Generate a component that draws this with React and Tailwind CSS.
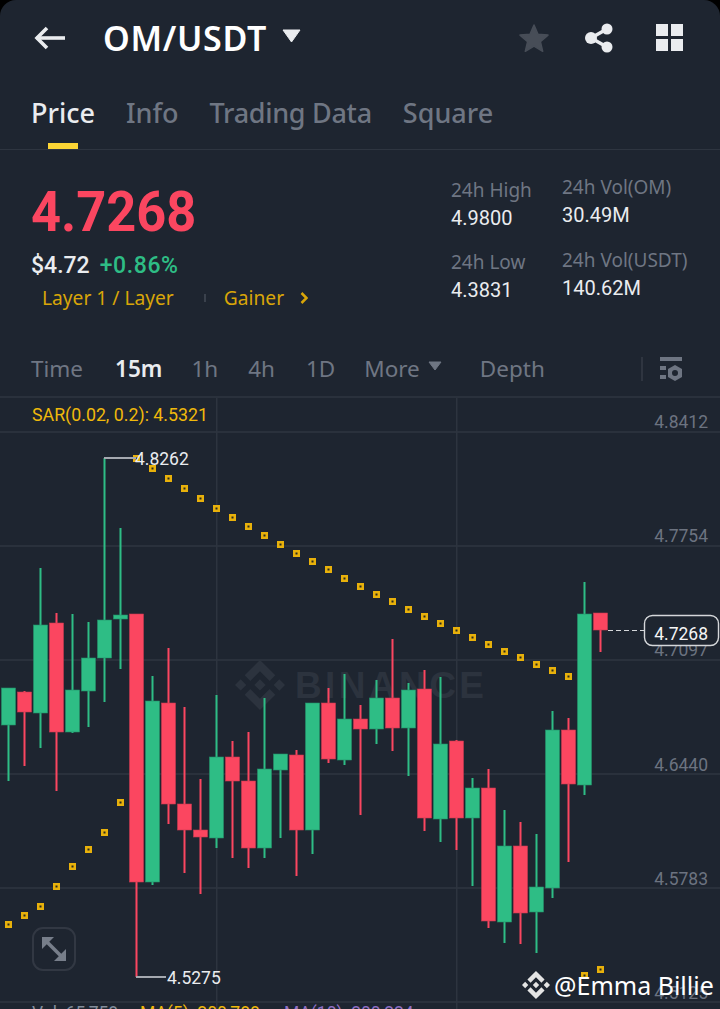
import React from "react";
import { SiBinance } from "react-icons/si";

// x, open-close box (top/bottom), wick (hi/lo), g = green
const candles = [
  [8, 688, 725, 688, 781, 1], [24, 692, 712, 691, 766, 0], [40, 625, 713, 568, 748, 1], [56, 623, 732, 613, 791, 0],
  [72, 690, 732, 614, 733, 1], [88, 658, 691, 622, 727, 1], [104, 620, 658, 458, 702, 1], [120, 615, 619, 528, 669, 1],
  [136, 614, 882, 614, 977, 0], [152, 701, 882, 676, 885, 1], [168, 703, 804, 648, 824, 0], [184, 804, 830, 707, 873, 0],
  [200, 830, 837, 779, 894, 0], [216, 757, 838, 695, 848, 1], [232, 757, 781, 741, 858, 0], [248, 781, 848, 732, 868, 0],
  [264, 769, 848, 698, 858, 1], [280, 754, 770, 754, 838, 1], [296, 755, 830, 750, 876, 0], [312, 703, 830, 703, 854, 1],
  [328, 703, 759, 688, 763, 0], [344, 719, 760, 674, 765, 1], [360, 719, 729, 705, 815, 0], [376, 698, 729, 680, 744, 1],
  [392, 698, 728, 639, 751, 0], [408, 690, 728, 683, 776, 1], [424, 689, 818, 670, 831, 0], [440, 744, 819, 677, 842, 1],
  [456, 741, 818, 740, 850, 0], [472, 788, 818, 778, 886, 1], [488, 788, 921, 769, 928, 0], [504, 846, 922, 810, 943, 1],
  [520, 846, 913, 822, 944, 0], [536, 887, 912, 834, 953, 1], [552, 730, 888, 711, 898, 1], [568, 730, 784, 718, 862, 0],
  [584, 614, 785, 582, 795, 1], [600, 613, 630, 613, 652, 0],
];

const sar = [
  [8, 924], [24, 915], [40, 906], [56, 886], [72, 866], [88, 849], [104, 832], [120, 802],
  [136, 458], [152, 468], [168, 478], [184, 488], [200, 498], [216, 508], [232, 517], [248, 526], [264, 535],
  [280, 544], [296, 553], [312, 561], [328, 569], [344, 578], [360, 586], [376, 594], [392, 601], [408, 609],
  [424, 616], [440, 623], [456, 630], [472, 637], [488, 644], [504, 651], [520, 657], [536, 664], [552, 670], [568, 676],
  [584, 975], [600, 969],
];

const gridY = [432, 546, 660, 774, 888, 1002];
const axis = [["4.8412", 428], ["4.7754", 542], ["4.7097", 656], ["4.6440", 771], ["4.5783", 885], ["4.5125", 999]];

function Chart() {
  return (
    <svg viewBox="0 398 720 611" className="block w-[720px] h-[611px] font-['Roboto']">
      {gridY.map((y) => (
        <rect key={y} x="0" y={y - 1} width="720" height="2" fill="#2a313c" />
      ))}
      <rect x="216" y="398" width="1.5" height="611" fill="#2d343f" />
      <rect x="456" y="398" width="1.5" height="611" fill="#2d343f" />

      {/* watermark */}
      <SiBinance x="235" y="660" size={50} fill="#2c333e" />
      <text x="295" y="698" fontSize="37" fontWeight="700" letterSpacing="3.4" fill="#2c333e" className="font-['Liberation_Sans']">
        BINANCE
      </text>

      {axis.map(([t, y]) => (
        <text key={t} x="708" y={y} textAnchor="end" fontSize="17.5" fill="#6c7380">{t}</text>
      ))}

      {candles.map(([x, top, bot, hi, lo, g]) => {
        const c = g ? "#2ebd85" : "#fb4660";
        const edge = g ? "#23916a" : "#c93a50";
        return (
          <g key={x}>
            <rect x={x - 0.5} y={hi} width="2" height={lo - hi} fill={c} />
            <rect x={x - 6.5} y={top} width="14" height={bot - top} fill={c} stroke={edge} strokeWidth="0.6" />
          </g>
        );
      })}

      {sar.map(([x, y]) => (
        <g key={x}>
          <rect x={x - 3} y={y - 3} width="7" height="7" fill="#e8b10b" />
          <rect x={x - 0.5} y={y - 0.5} width="2" height="2" fill="#2a2a1e" />
        </g>
      ))}

      <text x="32" y="421" fontSize="17.8" fill="#f0b90b">SAR(0.02, 0.2): 4.5321</text>

      {/* high / low marks */}
      <rect x="104" y="457" width="32" height="2" fill="#a5a9b0" />
      <text x="135" y="465" fontSize="17.5" fill="#eaecef">4.8262</text>
      <rect x="136" y="976" width="30" height="2" fill="#a5a9b0" />
      <text x="167" y="984" fontSize="17.5" fill="#eaecef">4.5275</text>

      {/* last price */}
      <line x1="608" y1="630.5" x2="644" y2="630.5" stroke="#d5d7da" strokeWidth="1.2" strokeDasharray="5 3" />
      <rect x="644.5" y="615.5" width="74" height="30" rx="8" fill="#1e2530" stroke="#d5d7da" strokeWidth="1.4" />
      <text x="708" y="640" textAnchor="end" fontSize="17.5" fill="#f5f5f5">4.7268</text>

      {/* expand button */}
      <rect x="33" y="928" width="42" height="42" rx="10" fill="none" stroke="#323843" strokeWidth="2" />
      <g fill="#777e8a">
        <polygon points="42,937 54,937 42,949" />
        <polygon points="66,961 54,961 66,949" />
      </g>
      <line x1="46" y1="941" x2="62" y2="957" stroke="#777e8a" strokeWidth="3.5" />

      {/* legend, cut off by the bottom of the window */}
      <text x="32" y="1019" fontSize="17.5" fill="#848e9c">Vol: 65,758</text>
      <text x="140" y="1019" fontSize="17.5" fill="#f0b90b">MA(5): 200,788</text>
      <text x="284" y="1019" fontSize="17.5" fill="#8e6fc4">MA(10): 200,224</text>
    </svg>
  );
}

function Stat({ label, value }) {
  return (
    <div>
      <div className="text-[19px] leading-[24px] text-[#6f7683] font-['Noto_Sans']">{label}</div>
      <div className="mt-[4px] text-[20px] leading-[24px] text-[#eaecef] font-['Roboto']">{value}</div>
    </div>
  );
}

export default function App() {
  return (
    <div className="w-[720px] h-[1009px] overflow-hidden bg-black">
      <div className="h-full bg-[#1e2530] rounded-t-[16px] flex flex-col font-['Noto_Sans']">
        {/* top bar */}
        <div className="h-[75px] flex items-center pl-[34px] shrink-0">
          <svg width="32" height="24" viewBox="0 0 32 24" fill="none" stroke="#eaecef" strokeWidth="3.6">
            <path d="M2.5 12H31" />
            <path d="M13 2 3 12l10 10" />
          </svg>
          <span className="ml-[37px] text-[34px] font-semibold tracking-[0.7px] text-white leading-none">OM/USDT</span>
          <svg className="ml-[15px] mb-[4px]" width="19" height="14" viewBox="0 0 19 14">
            <path d="M1 1h17L9.5 13z" fill="#eaecef" stroke="#eaecef" strokeWidth="1" strokeLinejoin="round" />
          </svg>
          <svg className="ml-[217px]" width="32" height="32" viewBox="0 0 32 32">
            <path d="M16 3l4 9.2 10 .9-7.600 6.500 2.300 9.700L16 24.200 7.300 29.300l2.300-9.700L2 13.100l10-.9z" fill="#474d57" stroke="#474d57" strokeWidth="1.500" strokeLinejoin="round" />
          </svg>
          <svg className="ml-[33px]" width="32" height="34" viewBox="0 0 32 34">
            <g fill="#eaecef">
              <circle cx="24" cy="8" r="5.500" />
              <circle cx="8" cy="17" r="6" />
              <circle cx="24" cy="26" r="5.500" />
            </g>
            <path d="M24 8 8 17l16 9" fill="none" stroke="#eaecef" strokeWidth="3.500" />
          </svg>
          <div className="ml-[41px] grid grid-cols-2 gap-[3px]">
            <div className="w-[12px] h-[12px] bg-[#eaecef]" />
            <div className="w-[12px] h-[12px] bg-[#eaecef]" />
            <div className="w-[12px] h-[12px] bg-[#eaecef]" />
            <div className="w-[12px] h-[12px] bg-[#eaecef]" />
          </div>
        </div>

        {/* tabs */}
        <div className="relative h-[75px] shrink-0 border-b border-[#2e3540] flex items-start pt-[18px] pl-[31px] gap-[31px] text-[27px] leading-[40px] font-medium text-[#6f7683]">
          <span className="text-[#eaecef]">Price</span>
          <span>Info</span>
          <span className="tracking-[-0.3px]">Trading Data</span>
          <span>Square</span>
          <div className="absolute left-[48px] bottom-0 w-[30px] h-[6px] bg-[#fcd535]" />
        </div>

        {/* price + stats */}
        <div className="h-[197px] shrink-0 flex">
          <div className="w-[451px] pl-[31px] pt-[24px]">
            <div className="origin-left scale-x-[0.935] text-[56px] leading-[76px] font-bold text-[#fb4660] font-['Roboto']">4.7268</div>
            <div className="flex items-center gap-[10px] mt-[1px] text-[23px] leading-[30px] font-['Roboto'] font-medium">
              <span className="text-[#eaecef]">$4.72</span>
              <span className="text-[#2ebd85] tracking-[0.6px]">+0.86%</span>
            </div>
            <div className="flex items-center pl-[11px] mt-[1px] text-[19.2px] leading-[32px] text-[#d9a508]">
              <span>Layer 1 / Layer</span>
              <div className="ml-[30px] w-[2px] h-[8px] bg-[#3a414c]" />
              <span className="ml-[18px]">Gainer</span>
              <svg className="ml-[16px]" width="8" height="12" viewBox="0 0 8 12" fill="none" stroke="#d9a508" strokeWidth="2.500">
                <path d="M1.500 1 6.500 6l-5 5" />
              </svg>
            </div>
          </div>
          <div className="w-[111px] pt-[28px] flex flex-col gap-[20px]">
            <Stat label="24h High" value="4.9800" />
            <Stat label="24h Low" value="4.3831" />
          </div>
          <div className="flex-1 pt-[25px] flex flex-col gap-[21px]">
            <Stat label="24h Vol(OM)" value="30.49M" />
            <Stat label="24h Vol(USDT)" value="140.62M" />
          </div>
        </div>

        {/* interval row */}
        <div className="h-[51px] shrink-0 border-b-2 border-[#2a313c] flex items-center pl-[31px] pb-[5px] text-[22.5px] text-[#6f7683] font-['Noto_Sans']">
          <span>Time</span>
          <span className="ml-[32px] font-semibold text-[#eaecef]">15m</span>
          <span className="ml-[29px]">1h</span>
          <span className="ml-[30px]">4h</span>
          <span className="ml-[31px]">1D</span>
          <span className="ml-[29px]">More</span>
          <svg className="ml-[8px] mb-[6px]" width="14" height="10" viewBox="0 0 14 10">
            <path d="M1 1h12L7 9z" fill="#6f7683" stroke="#6f7683" strokeLinejoin="round" />
          </svg>
          <span className="ml-[38px]">Depth</span>
          <div className="ml-[96px] w-[2px] h-[24px] bg-[#2f3540]" />
          <svg className="ml-[16px]" width="24" height="26" viewBox="0 0 24 26" fill="#6e7582">
            <rect x="1" y="1" width="22" height="4" />
            <rect x="1" y="10" width="6" height="4" />
            <rect x="1" y="19" width="6" height="4" />
            <path fillRule="evenodd" d="M16 9l7 4v8l-7 4-7-4v-8zm0 5a3 3 0 100 6 3 3 0 000-6z" />
          </svg>
        </div>

        {/* chart */}
        <div className="relative flex-1">
          <Chart />
          <div className="absolute left-[522px] top-[573px] flex items-center gap-[4px] whitespace-nowrap text-[25px] leading-[28px] text-white font-['Noto_Sans']">
            <SiBinance className="w-[28px] h-[28px] shrink-0 text-[#e4e4e4]" />
            <span>@Emma Billie</span>
          </div>
        </div>
      </div>
    </div>
  );
}
